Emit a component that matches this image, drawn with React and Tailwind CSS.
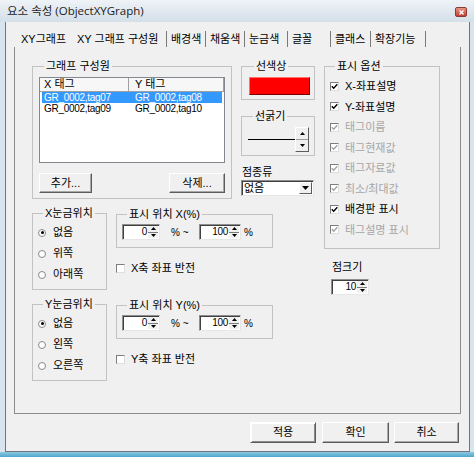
import React from 'react';

const tabs = [
  { label: 'XY그래프', w: 'w-[56px]', edge: false },
  { label: 'XY 그래프 구성원', w: 'w-[94px]', edge: true },
  { label: '배경색', w: 'w-[39px]', edge: true },
  { label: '채움색', w: 'w-[39px]', edge: true },
  { label: '눈금색', w: 'w-[43px]', edge: true },
  { label: '글꼴', w: 'w-[43px]', edge: true },
  { label: '클래스', w: 'w-[40px]', edge: true },
  { label: '확장기능', w: 'w-[55px]', edge: true },
];

const options = [
  { label: 'X-좌표설명' },
  { label: 'Y-좌표설명' },
  { label: '태그이름', dim: true },
  { label: '태그현재값', dim: true },
  { label: '태그자료값', dim: true },
  { label: '최소/최대값', dim: true },
  { label: '배경판 표시' },
  { label: '태그설명 표시', dim: true },
];

const Up = () => (
  <svg width="5" height="3" viewBox="0 0 5 3"><path d="M0 3L2.5 0L5 3Z" fill="#000" /></svg>
);
const Down = () => (
  <svg width="5" height="3" viewBox="0 0 5 3"><path d="M0 0L5 0L2.5 3Z" fill="#000" /></svg>
);

function Group({ title, className = '', children }) {
  return (
    <fieldset className={`border border-[#c2c2c2] ${className}`}>
      <legend className="ml-[5px] px-[2px] leading-[12px]">{title}</legend>
      {children}
    </fieldset>
  );
}

function Check({ children, on = true, dim, className = '' }) {
  return (
    <div className={`flex items-center ${className}`}>
      <span className="w-[9px] h-[9px] shrink-0 bg-white border border-t-[#7d7d7d] border-l-[#7d7d7d] border-r-[#dedede] border-b-[#dedede] flex items-center justify-center">
        {on && (
          <svg width="7" height="7" viewBox="0 0 7 7">
            <path d="M0.8 3.2L2.7 5.2L6.3 1.2" fill="none" stroke={dim ? '#a3a3a3' : '#000'} strokeWidth="1.4" />
          </svg>
        )}
      </span>
      <span className={dim ? 'ml-[6px] text-[#a6a6a6]' : 'ml-[6px]'}>{children}</span>
    </div>
  );
}

function Radio({ children, on }) {
  return (
    <div className="flex items-center h-[21px]">
      <span className="w-[8px] h-[8px] rounded-full bg-white border border-[#8a8a8a] flex items-center justify-center">
        {on && <span className="w-[3px] h-[3px] rounded-full bg-black" />}
      </span>
      <span className="ml-[7px]">{children}</span>
    </div>
  );
}

function Arrows({ className = '' }) {
  return (
    <div className={`flex flex-col bg-[#f0f0f0] ${className}`}>
      <span className="flex-1 flex items-center justify-center border-b border-[#7a7a7a]"><Up /></span>
      <span className="flex-1 flex items-center justify-center"><Down /></span>
    </div>
  );
}

function SpinEdit({ value, className = '' }) {
  return (
    <div className={`flex h-[16px] bg-white border border-t-[#8e8e8e] border-l-[#8e8e8e] border-r-[#e6e6e6] border-b-[#e6e6e6] shadow-[inset_1px_1px_0_#404040] ${className}`}>
      <span className="flex-1 text-right pr-[1px] leading-[14px] text-[10px] tracking-[-0.3px]">{value}</span>
      <Arrows className="w-[10px] my-[1px] mr-[1px]" />
    </div>
  );
}

function Button({ children, className = '' }) {
  return (
    <div className={`flex items-center justify-center bg-[#f0f0f0] border border-t-white border-l-white border-r-[#5c5c5c] border-b-[#5c5c5c] shadow-[inset_-1px_-1px_0_#a8a8a8] ${className}`}>
      {children}
    </div>
  );
}

export default function App() {
  return (
    <div className="w-[474px] h-[457px] flex flex-col overflow-hidden bg-[#d9e4ed] text-[11px] text-black font-['Liberation_Sans','Noto_Sans_CJK_KR',sans-serif]">
      {/* title bar */}
      <div className="h-[22px] shrink-0 flex items-center pl-[7px] pr-[7px] bg-linear-to-b from-[#eef3f7] to-[#d4dfe8]">
        <span className="text-[11.5px] text-[#1b1b1b] font-['Open_Sans','Noto_Sans_CJK_KR',sans-serif]">요소 속성 (ObjectXYGraph)</span>
        <span className="ml-auto mt-[2px] w-[12px] h-[10px] rounded-[2px] bg-linear-to-b from-[#e79484] to-[#c23c2c] border border-[#8c3b31] flex items-center justify-center">
          <svg width="5" height="5" viewBox="0 0 5 5"><path d="M0.5 0.5L4.5 4.5M4.5 0.5L0.5 4.5" stroke="#fff" strokeWidth="1.3" /></svg>
        </span>
      </div>

      {/* client area */}
      <div className="ml-[5px] mr-[4px] h-[430px] shrink-0 flex flex-col bg-[#f0f0f0] border border-t-0 border-[#6e7780]">
        <div className="mt-[9px] ml-[11px] h-[16px] flex">
          {tabs.map(t => (
            <span key={t.label} className={t.edge ? `${t.w} h-[16px] pl-[4px] leading-[16px] whitespace-nowrap border-r border-[#7a7a7a]` : `${t.w} h-[16px] pl-[4px] leading-[16px] whitespace-nowrap`}>
              {t.label}
            </span>
          ))}
        </div>

        {/* tab page */}
        <div className="mx-[8px] h-[367px] border border-t-0 border-[#8c8c8c] flex pl-[17px] pt-[13px]">
          <div className="w-[283px] flex flex-col">
            <div className="flex gap-[9px]">
              <Group title="그래프 구성원" className="w-[200px] h-[139px] px-[6px]">
                <div className="mt-[5px] h-[86px] bg-white border border-[#828790] flex flex-col">
                  <div className="h-[14px] flex bg-[#f7f7f7]">
                    <span className="w-[89px] pl-[4px] leading-[13px] border-r border-b border-[#a0a0a0]">X 태그</span>
                    <span className="flex-1 pl-[6px] leading-[13px] border-b border-r border-[#a0a0a0]">Y 태그</span>
                  </div>
                  <div className="h-[11px] mx-[2px] flex bg-[#3399ff] text-white text-[10px] leading-[11px] tracking-[-0.3px]">
                    <span className="w-[87px] pl-[2px]">GR_0002,tag07</span>
                    <span className="pl-[6px]">GR_0002,tag08</span>
                  </div>
                  <div className="h-[11px] mx-[2px] flex text-[10px] leading-[11px] tracking-[-0.3px]">
                    <span className="w-[87px] pl-[2px]">GR_0002,tag09</span>
                    <span className="pl-[6px]">GR_0002,tag10</span>
                  </div>
                </div>
                <div className="mt-[10px] flex justify-between">
                  <Button className="w-[53px] h-[20px]">추가...</Button>
                  <Button className="w-[56px] h-[20px]">삭제...</Button>
                </div>
              </Group>

              <div className="w-[74px] flex flex-col">
                <Group title="선색상" className="h-[40px] pl-[7px]">
                  <div className="mt-[5px] w-[61px] h-[18px] bg-[#ff0000] border border-t-[#ff7070] border-l-[#ff7070] border-r-[#7a0000] border-b-[#7a0000]" />
                </Group>
                <Group title="선굵기" className="mt-[10px] h-[46px] pl-[6px]">
                  <div className="mt-[5px] h-[25px] flex items-center">
                    <span className="w-[47px] h-px bg-black" />
                    <div className="w-[14px] h-[25px] flex flex-col bg-[#f0f0f0] border border-t-white border-l-white border-r-[#5c5c5c] border-b-[#5c5c5c]">
                      <span className="flex-1 flex items-center justify-center border-b border-[#9a9a9a]"><Up /></span>
                      <span className="flex-1 flex items-center justify-center"><Down /></span>
                    </div>
                  </div>
                </Group>
                <div className="mt-[9px] ml-[1px] leading-[14px]">점종류</div>
                <div className="mt-[1px] w-[73px] h-[16px] flex bg-white border border-t-[#8e8e8e] border-l-[#8e8e8e] border-r-[#e6e6e6] border-b-[#e6e6e6] shadow-[inset_1px_1px_0_#404040]">
                  <span className="flex-1 pl-[2px] leading-[14px]">없음</span>
                  <span className="w-[13px] my-[1px] mr-[1px] flex items-center justify-center bg-[#f0f0f0] border border-t-white border-l-white border-r-[#5c5c5c] border-b-[#5c5c5c]">
                    <svg width="7" height="4" viewBox="0 0 7 4"><path d="M0 0L7 0L3.5 4Z" fill="#000" /></svg>
                  </span>
                </div>
              </div>
            </div>

            {[
              { axis: 'X', radios: ['없음', '위쪽', '아래쪽'], flip: 'X축 좌표 반전' },
              { axis: 'Y', radios: ['없음', '왼쪽', '오른쪽'], flip: 'Y축 좌표 반전' },
            ].map(row => (
              <div key={row.axis} className="mt-[8px] flex">
                <Group title={`${row.axis}눈금위치`} className="w-[75px] h-[83px] pl-[5px] pt-[3px]">
                  {row.radios.map((r, i) => (
                    <Radio key={r} on={i === 0}>{r}</Radio>
                  ))}
                </Group>
                <div className="ml-[9px] flex flex-col">
                  <Group title={`표시 위치 ${row.axis}(%)`} className="mt-[1px] w-[157px] h-[40px] pl-[5px] pt-[4px]">
                    <div className="flex items-center">
                      <SpinEdit value="0" className="w-[38px]" />
                      <span className="ml-[11px] w-[28px] text-[10px]">% ~</span>
                      <SpinEdit value="100" className="w-[42px]" />
                      <span className="ml-[3px] text-[10px]">%</span>
                    </div>
                  </Group>
                  <Check on={false} className="mt-[14px] h-[12px]">{row.flip}</Check>
                </div>
              </div>
            ))}
          </div>

          <div className="ml-[9px] w-[116px] flex flex-col">
            <Group title="표시 옵션" className="h-[189px] pl-[5px] pt-[4px]">
              {options.map(o => (
                <Check key={o.label} dim={o.dim} className="h-[20.5px]">{o.label}</Check>
              ))}
            </Group>
            <div className="mt-[11px] ml-[8px] leading-[14px]">점크기</div>
            <SpinEdit value="10" className="mt-[5px] ml-[7px] w-[38px] h-[15px]" />
          </div>
        </div>

        {/* dialog buttons */}
        <div className="mt-[8px] flex justify-end pr-[10px]">
          <Button className="w-[66px] h-[21px] border-[#3a3a3a] border-t-[#3a3a3a] border-l-[#3a3a3a] shadow-[inset_1px_1px_0_#fff,inset_-1px_-1px_0_#8a8a8a]">적용</Button>
          <Button className="ml-[6px] w-[67px] h-[21px]">확인</Button>
          <Button className="ml-[5px] w-[65px] h-[21px]">취소</Button>
        </div>
      </div>

      <div className="flex-1 bg-linear-to-b from-[#8cc8e0] to-[#4ea6cc]" />
    </div>
  );
}
